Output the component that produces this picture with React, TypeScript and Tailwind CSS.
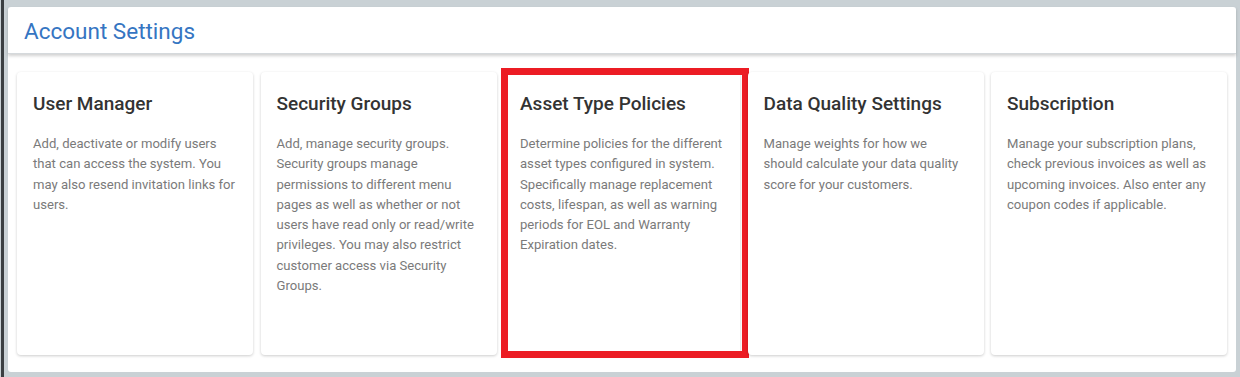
const cards = [
  {
    title: "User Manager",
    body: "Add, deactivate or modify users that can access the system. You may also resend invitation links for users.",
  },
  {
    title: "Security Groups",
    body: "Add, manage security groups. Security groups manage permissions to different menu pages as well as whether or not users have read only or read/write privileges. You may also restrict customer access via Security Groups.",
  },
  {
    title: "Asset Type Policies",
    body: "Determine policies for the different asset types configured in system. Specifically manage replacement costs, lifespan, as well as warning periods for EOL and Warranty Expiration dates.",
    highlight: true,
  },
  {
    title: "Data Quality Settings",
    body: "Manage weights for how we should calculate your data quality score for your customers.",
  },
  {
    title: "Subscription",
    body: "Manage your subscription plans, check previous invoices as well as upcoming invoices. Also enter any coupon codes if applicable.",
  },
];

export default function App() {
  return (
    <div className="h-[377px] w-[1240px] bg-[#c9d1d5] font-['Roboto',sans-serif] flex">
      <div className="w-[3px] ml-[1px] bg-[#3b3f42]" />
      <div className="flex-1 pl-[4px] pr-[4px] pt-[7px] pb-[5px]">
        <div className="h-full bg-white rounded-[3px] flex flex-col">
          <div className="h-[47px] shrink-0 flex items-center pl-[16px] pt-[3px] border-b border-[#d5d9dc] shadow-[0_2px_3px_rgba(0,0,0,0.18)]">
            <h1 className="text-[22.5px] leading-none text-[#3575c2] font-normal">Account Settings</h1>
          </div>
          <div className="flex-1 grid grid-cols-5 gap-x-[7.5px] pl-[9px] pr-[9px] pt-[18px] pb-[17px]">
            {cards.map((c) => (
              <div
                key={c.title}
                className="relative bg-white rounded-[4px] shadow-[0_1px_3px_rgba(0,0,0,0.2)] pl-[16px] pr-[15px] pt-[21px]"
              >
                <h2 className="text-[19px] leading-[22px] font-medium text-[#333333]">{c.title}</h2>
                <p className="mt-[19px] text-[13.1px] leading-[20.3px] text-[#7a7a7a]">{c.body}</p>
                {c.highlight && (
                  <div className="absolute -left-[3.5px] -right-[8.5px] -top-[4px] -bottom-[3px] border-[7px] border-[#ec1c24] pointer-events-none" />
                )}
              </div>
            ))}
          </div>
        </div>
      </div>
    </div>
  );
}
